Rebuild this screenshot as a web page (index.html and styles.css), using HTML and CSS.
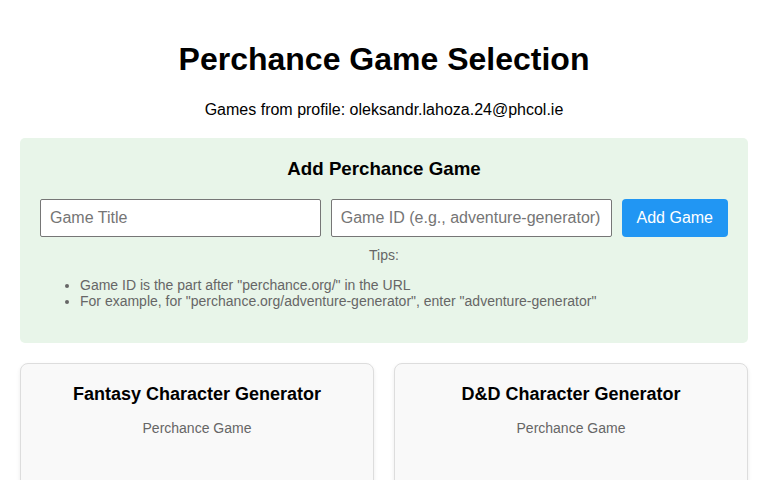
FILE: index.html
```html
<!DOCTYPE html>
<html>
<head>
<meta charset="utf-8">
<link rel="stylesheet" href="styles.css">
</head>
<body>
<h1 class="title">Perchance Game Selection</h1>
<p class="profile">Games from profile: oleksandr.lahoza.24@phcol.ie</p>
<section class="add-box">
  <h3 class="add-title">Add Perchance Game</h3>
  <div class="add-row">
    <input class="field" type="text" placeholder="Game Title">
    <input class="field" type="text" placeholder="Game ID (e.g., adventure-generator)">
    <button class="add-btn">Add Game</button>
  </div>
  <div class="tips">
    <p class="tips-label">Tips:</p>
    <ul class="tips-list">
      <li>Game ID is the part after "perchance.org/" in the URL</li>
      <li>For example, for "perchance.org/adventure-generator", enter "adventure-generator"</li>
    </ul>
  </div>
</section>
<div class="cards">
  <div class="card">
    <h3 class="card-title">Fantasy Character Generator</h3>
    <p class="card-sub">Perchance Game</p>
  </div>
  <div class="card">
    <h3 class="card-title">D&amp;D Character Generator</h3>
    <p class="card-sub">Perchance Game</p>
  </div>
</div>
</body>
</html>
```
FILE: styles.css
```css
html, body {
  margin: 0;
  background: #fff;
}
body {
  padding: 20px;
  font-family: "Liberation Sans", Arial, sans-serif;
  color: #000;
}
.title {
  font-size: 32px;
  text-align: center;
  margin: 21px 0;
}
.profile {
  text-align: center;
  font-size: 16px;
  margin: 23px 0 16px;
}
.add-box {
  background: #e8f5e9;
  border-radius: 5px;
  padding: 20px;
  margin: 19px 0 20px;
}
.add-title {
  font-size: 18.72px;
  text-align: center;
  margin: 0 0 19px;
}
.add-row {
  display: flex;
  gap: 10px;
}
.field {
  flex: 1;
  min-width: 0;
  height: 38px;
  box-sizing: border-box;
  padding: 0 9px;
  border: 1px solid #767676;
  border-radius: 2px;
  font-family: "Liberation Sans", Arial, sans-serif;
  font-size: 16px;
  background: #fff;
}
.field::placeholder {
  color: #757575;
}
.add-btn {
  height: 38px;
  padding: 0 15px;
  border: none;
  border-radius: 4px;
  background: #2196f3;
  color: #fff;
  font-family: "Liberation Sans", Arial, sans-serif;
  font-size: 16px;
}
.tips {
  font-size: 14px;
  color: #666;
  margin-top: 10px;
}
.tips-label {
  text-align: center;
  margin: 0 0 14px;
}
.tips-list {
  margin: 0 0 14px;
  padding-left: 40px;
}
.cards {
  display: grid;
  grid-template-columns: 1fr 1fr;
  gap: 20px;
}
.card {
  background: #f9f9f9;
  border: 1px solid #ddd;
  border-radius: 8px;
  box-shadow: 0 2px 4px rgba(0,0,0,0.08);
  padding: 20px;
  height: 200px;
  text-align: center;
}
.card-title {
  font-size: 18px;
  margin: 0 0 15px;
}
.card-sub {
  font-size: 14px;
  color: #666;
  margin: 0;
}
```
